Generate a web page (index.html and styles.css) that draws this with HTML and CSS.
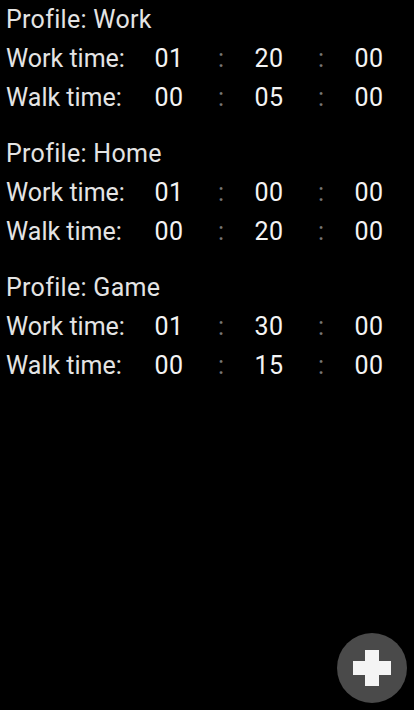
FILE: index.html
```html
<!DOCTYPE html>
<html lang="en">
<head>
  <meta charset="UTF-8" />
  <title>Profiles</title>
  <meta name="viewport" content="width=device-width, initial-scale=1">
  <link rel="stylesheet" href="styles.css">
</head>
<body>

  <div class="profiles">
    <div class="profile">
      <div class="profile-title">Profile: Work</div>
      <div class="time-row">
        <span class="label">Work time:</span>
        <span class="num">01</span><span class="sep">:</span>
        <span class="num">20</span><span class="sep">:</span>
        <span class="num">00</span>
      </div>
      <div class="time-row">
        <span class="label">Walk time:</span>
        <span class="num">00</span><span class="sep">:</span>
        <span class="num">05</span><span class="sep">:</span>
        <span class="num">00</span>
      </div>
    </div>

    <div class="profile">
      <div class="profile-title">Profile: Home</div>
      <div class="time-row">
        <span class="label">Work time:</span>
        <span class="num">01</span><span class="sep">:</span>
        <span class="num">00</span><span class="sep">:</span>
        <span class="num">00</span>
      </div>
      <div class="time-row">
        <span class="label">Walk time:</span>
        <span class="num">00</span><span class="sep">:</span>
        <span class="num">20</span><span class="sep">:</span>
        <span class="num">00</span>
      </div>
    </div>

    <div class="profile">
      <div class="profile-title">Profile: Game</div>
      <div class="time-row">
        <span class="label">Work time:</span>
        <span class="num">01</span><span class="sep">:</span>
        <span class="num">30</span><span class="sep">:</span>
        <span class="num">00</span>
      </div>
      <div class="time-row">
        <span class="label">Walk time:</span>
        <span class="num">00</span><span class="sep">:</span>
        <span class="num">15</span><span class="sep">:</span>
        <span class="num">00</span>
      </div>
    </div>
  </div>

  <!-- boton para agregar perfil -->
  <button class="fab" aria-label="Add profile">
    <svg width="38" height="36" viewBox="0 0 38 36">
      <rect x="12" y="0" width="14" height="36" fill="#f4f4f4"/>
      <rect x="0" y="11" width="38" height="14" fill="#f4f4f4"/>
    </svg>
  </button>

</body>
</html>
```

FILE: styles.css
```css
body {
  margin: 0;
  height: 100vh;
  background-color: #000;
  overflow: hidden;
  font-family: Roboto, "Liberation Sans", sans-serif;
  color: #e6e6e6;
  position: relative;
}

.profiles {
  padding: 0 0 0 6px;
}

.profile {
  margin-bottom: 17px;
}

.profile-title {
  font-size: 25px;
  line-height: 39px;
  color: #e4e4e4;
  letter-spacing: 0.3px;
}

.time-row {
  display: grid;
  grid-template-columns: 138px 50px 50px 50px 50px 50px;
  font-size: 25px;
  line-height: 39px;
}

.label {
  color: #e4e4e4;
  white-space: nowrap;
}

.num {
  text-align: center;
  color: #f4f4f4;
  letter-spacing: 0.5px;
}

.sep {
  text-align: center;
  color: #777;
  padding-left: 4px;
}

.fab {
  position: absolute;
  left: 337px;
  top: 633px;
  width: 70px;
  height: 70px;
  border-radius: 50%;
  border: none;
  padding: 0;
  background-color: #4a4a4a;
  display: flex;
  align-items: center;
  justify-content: center;
  cursor: pointer;
}
```
